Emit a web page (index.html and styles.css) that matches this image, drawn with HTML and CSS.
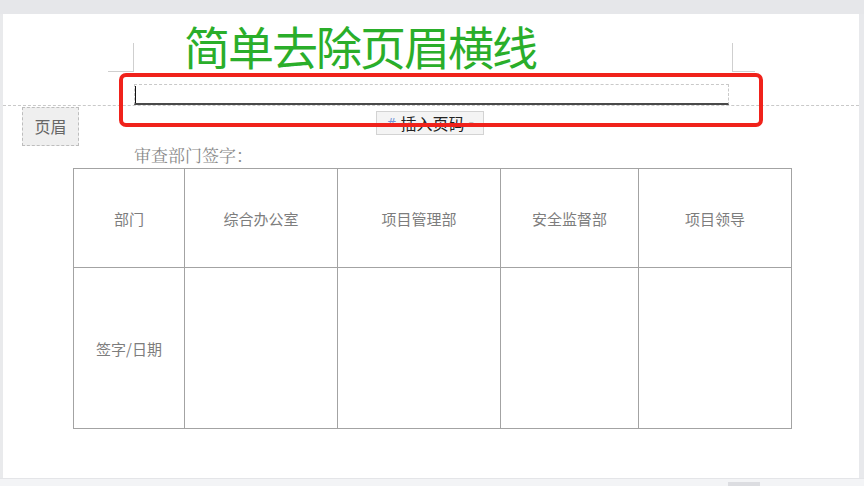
FILE: index.html
```html
<!DOCTYPE html>
<html lang="zh-CN">
<head>
<meta charset="utf-8">
<title>简单去除页眉横线</title>
<link rel="stylesheet" href="styles.css">
</head>
<body>
<div class="app">
  <div class="top-band"></div>
  <div class="workspace">
    <div class="gutter-l"></div>
    <div class="page">
      <div class="header">
        <div class="hdr-top">
          <div class="corner-l"></div>
          <div class="spacer"></div>
          <div class="corner-r"></div>
        </div>
        <div class="hdr-box"><span class="cursor"></span></div>
      </div>
      <div class="sign-label">审查部门签字：</div>
      <table class="sign-table">
        <colgroup>
          <col class="c1"><col class="c2"><col class="c3"><col class="c4"><col class="c5">
        </colgroup>
        <tr class="r1">
          <td>部门</td><td>综合办公室</td><td>项目管理部</td><td>安全监督部</td><td>项目领导</td>
        </tr>
        <tr class="r2">
          <td>签字/日期</td><td></td><td></td><td></td><td></td>
        </tr>
      </table>

      <div class="tag">页眉</div>
      <div class="pn-btn"><span class="hash">#</span><span class="pn-text">插入页码</span><span class="caret">▾</span></div>
      <div class="title">简单去除页眉横线</div>
      <div class="highlight"></div>
    </div>
    <div class="gutter-r"></div>
  </div>
  <div class="bottom-band"><div class="thumb"></div></div>
</div>
</body>
</html>
```

FILE: styles.css
```css
* { box-sizing: border-box; }
html, body { margin: 0; padding: 0; }
body {
  width: 864px;
  height: 486px;
  overflow: hidden;
  background: #e6e7ea;
  font-family: "Noto Sans CJK SC", "Noto Sans", sans-serif;
}
.app { display: flex; flex-direction: column; height: 486px; }
.top-band { height: 14px; background: #e6e7ea; flex: none; }
.workspace { display: flex; height: 464px; flex: none; }
.gutter-l { width: 3px; background: #e9eaec; flex: none; }
.gutter-r { width: 5px; background: #e8e9ec; flex: none; }
.page { position: relative; flex: 1; background: #fff; }

.header { height: 92px; padding-top: 29px; border-bottom: 1px dashed #c9c9c9; }
.hdr-top { display: flex; margin: 0 0 0 105px; width: 647px; height: 29px; }
.corner-l { width: 26px; border-right: 1px solid #cfcfcf; border-bottom: 1px solid #cfcfcf; }
.spacer { flex: 1; }
.corner-r { width: 23px; border-left: 1px solid #cfcfcf; border-bottom: 1px solid #cfcfcf; }
.hdr-box {
  margin: 12px 0 0 131px;
  width: 595px;
  height: 21px;
  border: 1px dashed #c9c9c9;
  border-bottom: 2px solid #4a4a4a;
  padding: 1px 0 0 0;
}
.cursor { display: block; width: 1px; height: 17px; background: #111; }

.sign-label {
  margin: 37px 0 0 131px;
  font-family: "Noto Serif CJK SC", "Noto Sans CJK SC", serif;
  font-size: 17px;
  line-height: 23px;
  color: #8a8a8a;
}
.sign-table {
  margin: 2px 0 0 70px;
  border-collapse: collapse;
  table-layout: fixed;
  width: 718px;
}
.c1 { width: 111px; }
.c2 { width: 153px; }
.c3 { width: 163px; }
.c4 { width: 138px; }
.c5 { width: 153px; }
.sign-table td {
  border: 1px solid #a3a3a3;
  text-align: center;
  vertical-align: middle;
  font-size: 15px;
  color: #7d7d7d;
  padding: 0;
}
.r1 td { height: 99px; }
.r2 td { height: 161px; }

.tag {
  position: absolute;
  left: 19px;
  top: 93px;
  width: 57px;
  height: 39px;
  border: 1px dashed #bdbdbd;
  background: #efefef;
  color: #666;
  font-size: 16px;
  line-height: 37px;
  text-align: center;
}
.pn-btn {
  position: absolute;
  left: 373px;
  top: 97px;
  width: 108px;
  height: 24px;
  border: 1px solid #d3d3d3;
  background: #f4f4f4;
  display: flex;
  align-items: center;
  justify-content: center;
  gap: 4px;
  font-size: 16px;
  color: #222;
}
.hash { color: #7596d6; font-size: 12px; font-family: "DejaVu Sans", sans-serif; }
.pn-text { line-height: 22px; }
.caret { color: #999; font-size: 9px; }

.title {
  position: absolute;
  left: 181px;
  top: 1px;
  font-size: 46px;
  line-height: 60px;
  color: #2aae2a;
  white-space: nowrap;
  letter-spacing: -2px;
}
.highlight {
  position: absolute;
  left: 116px;
  top: 59px;
  width: 644px;
  height: 54px;
  border: 4px solid #f0221b;
  border-radius: 7px;
}

.bottom-band {
  position: relative;
  height: 8px;
  flex: none;
  background: #f3f4f6;
  border-top: 1px solid #e4e5e8;
}
.thumb {
  position: absolute;
  left: 728px;
  bottom: 0;
  width: 32px;
  height: 4px;
  background: #dcdde1;
}
```
